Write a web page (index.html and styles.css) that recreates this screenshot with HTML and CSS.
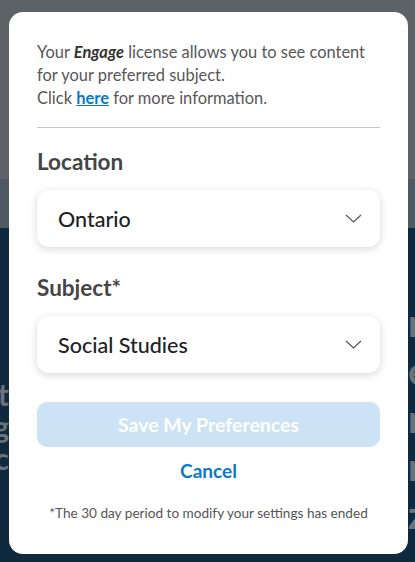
FILE: index.html
```html
<!DOCTYPE html>
<html lang="en">
<head>
<meta charset="utf-8">
<title>Preferences</title>
<link rel="stylesheet" href="styles.css">
</head>
<body>
<div class="page">
  <div class="top"></div>
  <div class="band"></div>
  <div class="hero">
    <div class="hero-left">
      <span>Get</span>
      <span>Using</span>
      <span>Topic</span>
    </div>
    <div class="hero-right">
      <span>rr</span>
      <span>ee</span>
      <span>nn</span>
      <span>rr</span>
      <span>zz</span>
    </div>
  </div>
</div>

<div class="overlay">
  <div class="modal">
    <p class="intro">Your <strong class="brand">Engage</strong> license allows you to see content for your preferred subject.<br>Click <a href="#" class="link">here</a> for more information.</p>
    <hr class="divider">

    <label class="field-label">Location</label>
    <div class="select">
      <span class="select-value">Ontario</span>
      <svg class="chevron" width="17" height="9" viewBox="0 0 17 9"><polyline points="1,1 8.5,8 16,1" fill="none" stroke="#555" stroke-width="1.2"/></svg>
    </div>

    <label class="field-label">Subject*</label>
    <div class="select">
      <span class="select-value">Social Studies</span>
      <svg class="chevron" width="17" height="9" viewBox="0 0 17 9"><polyline points="1,1 8.5,8 16,1" fill="none" stroke="#555" stroke-width="1.2"/></svg>
    </div>

    <button class="save" disabled>Save My Preferences</button>
    <a href="#" class="cancel">Cancel</a>
    <p class="note">*The 30 day period to modify your settings has ended</p>
  </div>
</div>
</body>
</html>
```

FILE: styles.css
```css
html, body {
  margin: 0;
  padding: 0;
}
body {
  width: 415px;
  height: 562px;
  overflow: hidden;
  font-family: Lato, "Noto Sans", sans-serif;
  background: #0f2a3e;
}
.page {
  display: flex;
  flex-direction: column;
  height: 562px;
}
.top {
  height: 178px;
  background: #5d6266;
  border-bottom: 1px solid #6a5f5f;
}
.band {
  height: 49px;
  background: #4e5a61;
}
.hero {
  flex: 1;
  background: #0f2a3e;
  display: flex;
  justify-content: space-between;
  overflow: hidden;
}
.hero-left {
  width: 9px;
  overflow: hidden;
  direction: rtl;
  display: flex;
  flex-direction: column;
  padding-top: 150px;
  font-size: 30px;
  font-weight: 700;
  line-height: 32px;
  color: #6b727a;
  white-space: nowrap;
}
.hero-right {
  width: 7px;
  overflow: hidden;
  display: flex;
  flex-direction: column;
  padding-top: 70px;
  font-size: 38px;
  font-weight: 700;
  line-height: 48px;
  color: #6b727a;
  white-space: nowrap;
}

.overlay {
  position: fixed;
  inset: 0;
}
.modal {
  position: absolute;
  left: 9px;
  top: 12px;
  width: 399px;
  height: 542px;
  box-sizing: border-box;
  background: #fff;
  border-radius: 14px;
  padding: 29px 28px 0 28px;
  display: flex;
  flex-direction: column;
}
.intro {
  margin: 0;
  font-size: 16.45px;
  line-height: 23px;
  color: #575757;
}
.brand {
  font-style: italic;
  font-weight: 700;
  color: #333;
}
.link {
  color: #0a78c8;
  font-weight: 700;
  text-decoration: underline;
}
.divider {
  margin: 17px 0 0 0;
  border: 0;
  border-top: 1px solid #c8c8c8;
  height: 0;
}
.field-label {
  margin-top: 20px;
  font-size: 22.5px;
  font-weight: 700;
  line-height: 28px;
  color: #454545;
}
.select {
  margin-top: 14px;
  height: 57px;
  border-radius: 12px;
  background: #fff;
  box-shadow: 0 2px 8px rgba(0, 0, 0, 0.16);
  display: flex;
  align-items: center;
  justify-content: space-between;
  padding: 0 18px 0 21px;
}
.select-value {
  font-size: 21.5px;
  font-weight: 500;
  color: #222;
}
.select + .field-label {
  margin-top: 27px;
}
.save {
  margin-top: 29px;
  height: 45px;
  border: 0;
  border-radius: 10px;
  background: #cce3f5;
  color: #fff;
  font-family: inherit;
  font-size: 19.5px;
  font-weight: 700;
}
.cancel {
  align-self: center;
  margin-top: 12px;
  font-size: 19px;
  font-weight: 700;
  line-height: 24px;
  color: #0b78c8;
  text-decoration: none;
}
.note {
  margin: 21px 0 0 0;
  text-align: center;
  font-size: 13.6px;
  line-height: 18px;
  color: #555;
}
```
